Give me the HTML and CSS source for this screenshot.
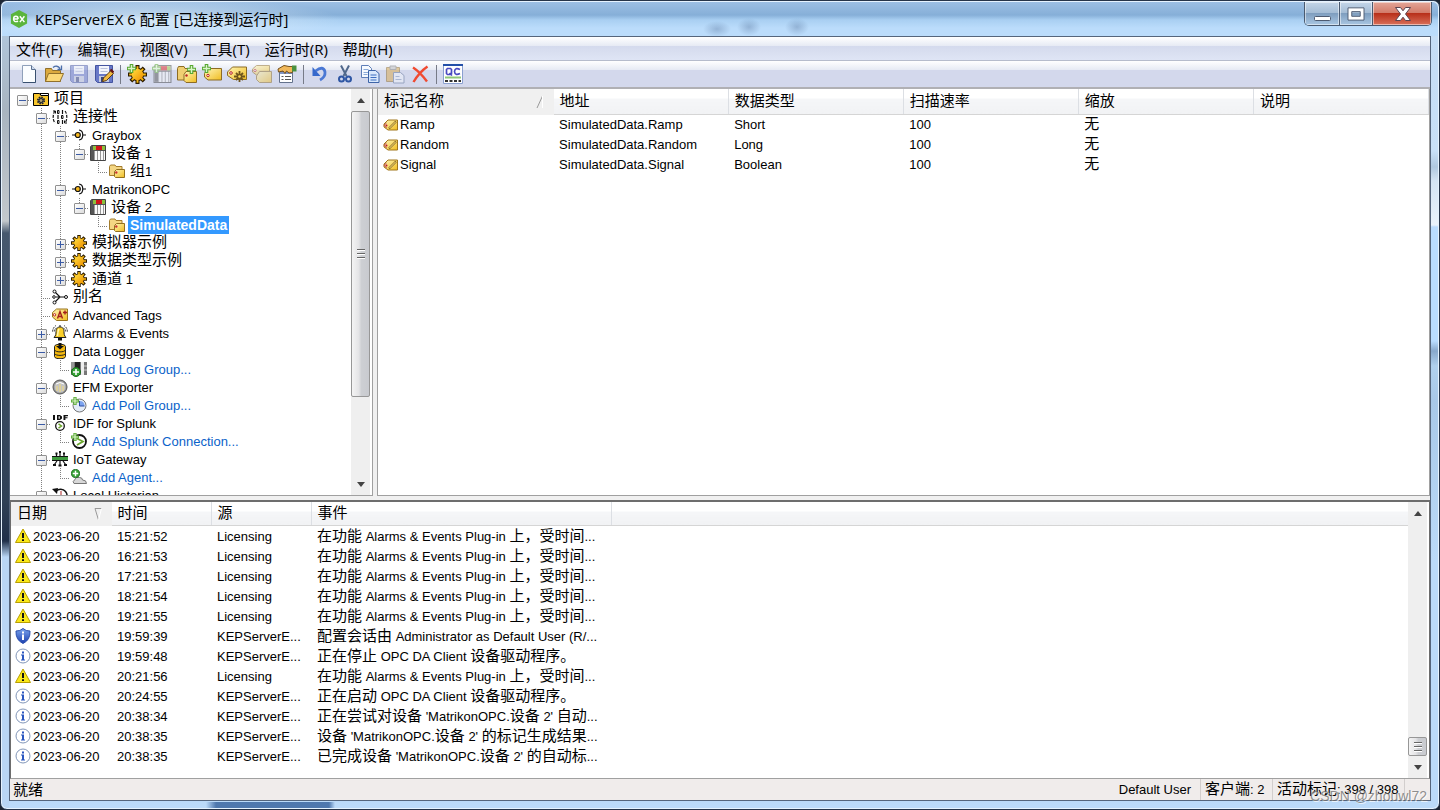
FILE: index.html
```html
<!DOCTYPE html>
<html lang="zh-CN">
<head>
    <meta charset="UTF-8">
    <meta name="viewport" content="width=device-width, initial-scale=1.0">
    <title>KEPServerEX 6 配置</title>
    <link rel="stylesheet" href="styles.css">
</head>
<body>

    <!-- shared icons -->
    <svg class="defs" aria-hidden="true">
        <defs>
            <linearGradient id="gold" x1="0" y1="0" x2="1" y2="1">
                <stop offset="0" stop-color="#fff6b8"/><stop offset="1" stop-color="#f0bc20"/>
            </linearGradient>
            <linearGradient id="orange" x1="0" y1="0" x2="1" y2="1">
                <stop offset="0" stop-color="#ffe040"/><stop offset="1" stop-color="#f09000"/>
            </linearGradient>
            <linearGradient id="bluegrad" x1="0" y1="0" x2="0" y2="1">
                <stop offset="0" stop-color="#7aa4ee"/><stop offset="1" stop-color="#1c3fae"/>
            </linearGradient>
        </defs>

        <symbol id="i-gear" viewBox="0 0 16 16">
            <path d="M8 0v16M0 8h16M2.400 2.400l11.200 11.200M13.600 2.400L2.400 13.600" stroke="#2c1c00" stroke-width="3.400"/>
            <circle cx="8" cy="8" r="5.600" fill="#2c1c00"/>
            <path d="M8 1v14M1 8h14M3.200 3.200l9.600 9.600M12.800 3.200l-9.600 9.600" stroke="#f8b810" stroke-width="1.600"/>
            <circle cx="8" cy="8" r="4.800" fill="url(#orange)"/>
        </symbol>
        <symbol id="i-project" viewBox="0 0 16 16">
            <path d="M.5 2.500h6l1.500 2h7.500v10H.5z" fill="#f8c62c" stroke="#000"/>
            <path d="M7 2.500h8.500v2H8z" fill="#fff" stroke="#000"/>
            <circle cx="8" cy="9.500" r="3.200" fill="#888" stroke="#222" stroke-width="1.800" stroke-dasharray="1.500 1"/>
            <circle cx="8" cy="9.500" r="2" fill="#b0a070" stroke="#222"/>
        </symbol>
        <symbol id="i-connect" viewBox="0 0 16 16">
            <path d="M3 2C.6 5 .6 11 3 14M13 2c2.400 3 2.400 9 0 12" fill="none" stroke="#111" stroke-width="1.200" stroke-dasharray="3 1.200"/>
            <path d="M1 2h2.500v2.500M15 14h-2.500v-2.500" fill="none" stroke="#111"/>
            <path d="M5.500 1.500h1.500v3H5.500zM5.500 11.500h1.500v3H5.500zM9.500 6.500H11v3H9.500z" fill="#fff" stroke="#111"/>
            <path d="M10.500 1v4M6 6v4M10.500 11v4" stroke="#111" stroke-width="1.200"/>
        </symbol>
        <symbol id="i-channel" viewBox="0 0 16 16">
            <path d="M1 8h4M12 8h3" stroke="#111" stroke-width="1.200"/>
            <circle cx="6.800" cy="8" r="2.500" fill="#f6b820" stroke="#111" stroke-width="1.200"/>
            <path d="M8 3c5 .5 5 9.500 0 10" fill="none" stroke="#111" stroke-width="1.200"/>
        </symbol>
        <symbol id="i-device" viewBox="0 0 16 16">
            <path d="M1.500.5h14v15H.5v-14z" fill="#fafafa" stroke="#444"/>
            <path d="M1 1h3v14H1z" fill="#555"/><path d="M6 1h6v4H6z" fill="#d0151b"/>
            <path d="M3 1h3v4H3zM12 1h3v4h-3z" fill="#8cc03c"/>
            <path d="M4.500 5v10M7.500 5v10M10.500 5v10M13.500 5v10" stroke="#999"/><path d="M1 5.500h14" stroke="#555"/>
        </symbol>
        <symbol id="i-group" viewBox="0 0 16 16">
            <path d="M.5 3.500l1-1.500h4.500l1 1.500h6v9H.5z" fill="#f4d683" stroke="#a47c2c"/>
            <path d="M5.500 8.500l2-2h8v8h-9l-1-1z" fill="url(#gold)" stroke="#93701f"/>
            <circle cx="7.300" cy="9.500" r="1.200" fill="#c33"/>
        </symbol>
        <symbol id="i-alias" viewBox="0 0 16 16">
            <path d="M3 3l5 5-5 5M8 8h5M4 8h3" fill="none" stroke="#111" stroke-width="1.200"/>
            <g fill="#fff" stroke="#111"><circle cx="2.500" cy="2.500" r="1.500"/><circle cx="2" cy="8" r="1.300"/><circle cx="2.500" cy="13.500" r="1.500"/><circle cx="14" cy="8" r="1.500"/></g>
        </symbol>
        <symbol id="i-advtag" viewBox="0 0 16 16">
            <path d="M.5 5.500l4-3.500h11v11.500h-11l-4-3.500z" fill="url(#gold)" stroke="#9a741c"/>
            <circle cx="2.500" cy="7.800" r="1.200" fill="#fff" stroke="#b22"/>
            <path d="M5.500 11.500L8 4.500l2.500 7M6.500 9.500h3M11 5.500h4M13 3.500v4" fill="none" stroke="#a3201c" stroke-width="1.400"/>
        </symbol>
        <symbol id="i-bell" viewBox="0 0 16 16">
            <path d="M2 12.500c2-2 2-4 2-6C4 3 6 2 8 2s4 1 4 4.500c0 2 0 4 2 6z" fill="#f9cf2a" stroke="#222"/>
            <path d="M7 4c-1.300 2-1 4-1.500 7" stroke="#fff6b0" fill="none" stroke-width="1.500"/>
            <path d="M6 13h4v2.500H6zM7.500 0h1v2h-1z" fill="#111"/>
            <path d="M.5 6.500Q1 2.500 4 .5M15.500 6.500Q15 2.500 12 .5M2.200 6.500q.3-2.200 2-3.500M13.800 6.500q-.3-2.200-2-3.500" fill="none" stroke="#222" stroke-dasharray="2 1"/>
        </symbol>
        <symbol id="i-logger" viewBox="0 0 16 16">
            <path d="M2.500 3.500c0-3 11-3 11 0v10c0 3-11 3-11 0z" fill="#f4b90f" stroke="#222"/>
            <path d="M2.500 7c1 2.500 10 2.500 11 0M2.500 10.500c1 2.500 10 2.500 11 0" fill="none" stroke="#222"/>
            <path d="M6.500 0h3v3H12L8 6.500 4 3h2.500z" fill="#111"/>
        </symbol>
        <symbol id="i-plus" viewBox="0 0 10 10">
            <circle cx="5" cy="5" r="4.500" fill="#36a336" stroke="#1d6c1d"/><path d="M5 2v6M2 5h6" stroke="#fff" stroke-width="1.600"/>
        </symbol>
        <symbol id="i-star" viewBox="0 0 10 10">
            <path d="M3 0h4v3h3v4H7v3H3V7H0V3h3z" fill="#58a832"/><path d="M5 1v8M1 5h8" stroke="#d9f4c8" stroke-width="1.500"/>
        </symbol>
        <symbol id="i-addlog" viewBox="0 0 16 16">
            <path d="M0 1h16v13H0z" fill="#777"/><path d="M4 1h5v13H4z" fill="#222"/><path d="M10 1h3v13h-3z" fill="#eee"/><path d="M0 1h3v7H0z" fill="#999"/><path d="M13 5h3M13 9h3" stroke="#ccc"/>
            <use href="#i-plus" x="0" y="6" width="10" height="10"/>
        </symbol>
        <symbol id="i-efm" viewBox="0 0 16 16">
            <circle cx="8" cy="8" r="7" fill="#999" stroke="#555"/><circle cx="8" cy="8" r="5.500" fill="#c4c4c4"/>
            <path d="M5 12V7M8 13V5M11 12V7" stroke="#f4dc78"/><path d="M4 5q4-3 8 0" fill="none" stroke="#fff"/>
        </symbol>
        <symbol id="i-addpoll" viewBox="0 0 16 16">
            <circle cx="8.500" cy="8.500" r="6.500" fill="#e3ecf8" stroke="#777"/><path d="M8.500 4v5h5q0-5-5-5z" fill="#7da4f0"/><path d="M8.500 4v5h5" fill="none" stroke="#2a4aa0"/>
            <use href="#i-star" x="0" y="0" width="8" height="8"/>
        </symbol>
        <symbol id="i-idf" viewBox="0 0 16 16">
            <path d="M1 0h2v5H1zM5 0h3l2 1.500v2L8 5H5zM11.500 0H16v1.200h-2.600v1H15.500v1h-2.100V5h-1.900z" fill="#111"/>
            <path d="M6.600 1.200h1.200v2.600H6.600z" fill="#fff"/>
            <circle cx="8" cy="11" r="4.300" fill="#fff" stroke="#111" stroke-width="1.300"/><path d="M6.500 8.800l3 2.200-3 2.200" fill="none" stroke="#6aa42c" stroke-width="1.500"/>
        </symbol>
        <symbol id="i-addsplunk" viewBox="0 0 16 16">
            <circle cx="8.500" cy="8.500" r="6.500" fill="#fff" stroke="#111" stroke-width="1.800"/><path d="M6 5.500l6 3-6 3.500" fill="none" stroke="#6aa42c" stroke-width="1.700"/>
            <use href="#i-star" x="0" y="0" width="8" height="8"/>
        </symbol>
        <symbol id="i-iot" viewBox="0 0 16 16">
            <path d="M0 5.500h16v3.500H0z" fill="#3f9a3f"/><path d="M0 5.500h16M0 9.500h16M8 0v5M4.500 2v3M12 2v3M8 9v6M5 10l-3 4M11 10l3 4" stroke="#111" stroke-width="1.200" fill="none"/>
            <path d="M7 0h2v2H7zM3.500 1.500h2v2h-2zM11 1.500h2v2h-2zM1 13h3v2H1zM6.500 13.500h3v2h-3zM12 13h3v2h-3z" fill="#111"/>
        </symbol>
        <symbol id="i-addagent" viewBox="0 0 16 16">
            <path d="M3 14.500q-2-2 .5-3.500 1.500-4 5-2.500 3 0 3 2.500 4 0 4 3.500z" fill="#d8d8d8" stroke="#777"/>
            <use href="#i-plus" x="0" y="0" width="9" height="9"/>
        </symbol>
        <symbol id="i-history" viewBox="0 0 16 16">
            <path d="M4 4a6.500 6.500 0 1 1-1 8" fill="none" stroke="#111" stroke-width="1.500"/><path d="M0 2l6-1-1 6z" fill="#111"/><path d="M9 4v6" stroke="#a22"/>
        </symbol>
        <symbol id="i-tag" viewBox="0 0 16 14">
            <path d="M1 6l4-4h9.500v10H5L1 9z" fill="url(#gold)" stroke="#a0761c"/>
            <path d="M3.500 5L1 7.200 3.500 10" fill="#f2c4b4" stroke="#b85040"/><circle cx="3.500" cy="7.500" r="1" fill="#b22"/>
            <path d="M6 10.500l7-7" stroke="#8a6a20" stroke-width="2.200"/><path d="M6.500 10l6-6" stroke="#ffe88a"/>
        </symbol>
        <symbol id="i-warn" viewBox="0 0 16 16">
            <path d="M8 1L15.500 14.500H.5z" fill="#f9e71a" stroke="#b89e00" stroke-linejoin="round"/>
            <path d="M8 5v5" stroke="#111" stroke-width="2"/><path d="M7 11.200h2v1.800H7z" fill="#111"/>
        </symbol>
        <symbol id="i-info" viewBox="0 0 16 16">
            <circle cx="8" cy="8" r="7" fill="#fff" stroke="#8296b8"/><path d="M7 3.500h2v2H7zM6 6.500h3v5h1v1H6v-1h1v-4H6z" fill="#2a56c0"/>
        </symbol>
        <symbol id="i-shield" viewBox="0 0 16 16">
            <path d="M1 3q4 .3 7-2.500Q11 3.300 15 3q.5 9-7 12.500Q.5 12 1 3z" fill="url(#bluegrad)" stroke="#2a4fae"/>
            <path d="M7 3.500h2v2H7zM7 6.500h2V12H7z" fill="#fff"/>
        </symbol>
        <symbol id="i-new" viewBox="0 0 20 20">
            <path d="M3.500 1.500h9l4 4v13h-13z" fill="#fbfdff" stroke="#8fa0ba"/><path d="M12.500 1.500v4h4" fill="#cfdcef" stroke="#5d7191"/><path d="M4 18.500h12.500V6" fill="none" stroke="#39506f"/>
        </symbol>
        <symbol id="i-open" viewBox="0 0 20 20">
            <path d="M1.500 4.500h6l1 2h8v11h-15z" fill="#dba93e" stroke="#91702b"/><path d="M4.500 9.500h15l-3.500 8H1.500z" fill="#fbd877" stroke="#91702b"/>
            <path d="M9 3.500q4-3 7 1M17.500 1.500v4h-4" fill="none" stroke="#4b6da8" stroke-width="1.300"/>
        </symbol>
        <symbol id="i-save" viewBox="0 0 20 20">
            <path d="M1.500 1.500h17v17h-15l-2-2z" fill="#6878c8" stroke="#4454a0"/><path d="M5 2h10v8H5z" fill="#f2f4fc"/><path d="M5 12h10v6H5z" fill="#c4cade"/><path d="M7 13h3v5H7z" fill="#38427c"/><path d="M6.500 4.500h7M6.500 7.500h7" stroke="#b8c0dc"/>
        </symbol>
        <symbol id="i-saveas" viewBox="0 0 20 20">
            <use href="#i-save" width="20" height="20"/><path d="M8.500 17.500l1-3.500 7-7 3 2.500-7 7z" fill="#f0b840" stroke="#5b3c12"/><path d="M16.500 5.500l3 3" stroke="#611" stroke-width="2"/>
        </symbol>
        <symbol id="i-newchannel" viewBox="0 0 20 20">
            <use href="#i-gear" x="1" y="1" width="19" height="19"/><use href="#i-star" x="0" y="0" width="9" height="9"/>
        </symbol>
        <symbol id="i-newdevice" viewBox="0 0 20 20">
            <use href="#i-device" x="1" y="1" width="19" height="18"/><use href="#i-star" x="0" y="0" width="9" height="9"/>
        </symbol>
        <symbol id="i-newgroup" viewBox="0 0 20 20">
            <path d="M.5 4.500l1-2H7l1 2h7v11.500H.5z" fill="#f0cf72" stroke="#8d6c24"/><path d="M7 10.500l2-3h10.500v11H9l-2-2z" fill="url(#gold)" stroke="#8d6c24"/><use href="#i-star" x="10" y="1" width="9" height="9"/><circle cx="9.500" cy="11.500" r="1.200" fill="#b22"/>
        </symbol>
        <symbol id="i-newtag" viewBox="0 0 20 20">
            <path d="M2.500 9.500l3-5h14v11.500H6l-3.500-3z" fill="url(#gold)" stroke="#8d6c24"/><use href="#i-star" x="0" y="0" width="9" height="9"/><circle cx="6" cy="11.500" r="1.200" fill="#fff" stroke="#b22"/>
        </symbol>
        <symbol id="i-autotag" viewBox="0 0 20 20">
            <path d="M.5 8l5-5h14v12.500h-13l-6-4z" fill="url(#gold)" stroke="#8d6c24"/><circle cx="4" cy="9" r="1.300" fill="#fff" stroke="#b22"/>
            <path d="M12.500 7v11M7 12.500h11M9 9l7 7M16 9l-7 7" stroke="#6e541c" stroke-width="1.800"/><circle cx="12.500" cy="12.500" r="1.300" fill="#ffd850"/>
        </symbol>
        <symbol id="i-tags" viewBox="0 0 20 20">
            <path d="M.5 5l4-3.500h13v9.500h-13l-4-3z" fill="url(#gold)" stroke="#8d6c24"/><path d="M4.500 12l3-4.500h12v11h-12l-3-3z" fill="url(#gold)" stroke="#8d6c24"/><circle cx="3" cy="6.500" r="1.200" fill="#fff" stroke="#b22"/>
        </symbol>
        <symbol id="i-props" viewBox="0 0 20 20">
            <path d="M2.500 7.500h13v11h-13z" fill="#fff" stroke="#64728c"/><path d="M3 8h12v2H3z" fill="#7f94c4"/><path d="M4.500 12.500h2M4.500 15.500h2M8 12.500h6M8 15.500h6" stroke="#555"/>
            <path d="M1 5l6-3.500 5 1h3.500v6L12 9 9.500 7 8 9.500 6 7 1.500 8z" fill="#f1b85a" stroke="#74501c"/><path d="M15 1.500h4.500v6H15z" fill="#4a9140"/>
        </symbol>
        <symbol id="i-undo" viewBox="0 0 20 20">
            <path d="M5.500 7q8-6 9.500 1 .500 5-5 8" fill="none" stroke="#4a78d4" stroke-width="2.800"/><path d="M2.500 3v9h8z" fill="#3568cc"/>
        </symbol>
        <symbol id="i-cut" viewBox="0 0 20 20">
            <path d="M6 1.500L11.500 12M14 1.500L8.500 12" stroke="#51698c" stroke-width="2" fill="none"/><circle cx="6.500" cy="15" r="2.500" fill="none" stroke="#2e56a4" stroke-width="2"/><circle cx="13.500" cy="15" r="2.500" fill="none" stroke="#2e56a4" stroke-width="2"/>
        </symbol>
        <symbol id="i-copy" viewBox="0 0 20 20">
            <path d="M1.500 1.500h7l3 3v9h-10z" fill="#f6faff" stroke="#5f7fb8"/><path d="M3.500 5.500h5M3.500 8.500h5M3.500 10.500h4" stroke="#8baad8"/>
            <path d="M8.500 6.500h7l3.500 3v9H8.500z" fill="#d8e8fc" stroke="#3d64a8"/><path d="M10.500 11h6M10.500 13.500h6M10.500 16h6" stroke="#3d6ec0"/>
        </symbol>
        <symbol id="i-paste" viewBox="0 0 20 20">
            <path d="M1.500 3.500h13v14h-13z" fill="#d9a848" stroke="#8f6b28"/><path d="M5 2h6v3.500H5z" fill="#bbb" stroke="#777"/><path d="M8.500 8.500h7l3.500 3v7.500H8.500z" fill="#f2f5fb" stroke="#5f7296"/><path d="M10.500 12.500h4M10.500 15.500h6" stroke="#8296b8"/>
        </symbol>
        <symbol id="i-delete" viewBox="0 0 20 20">
            <path d="M3 3.500q7 4.500 14 14M17.500 2.500Q9.500 8 3.500 18" fill="none" stroke="#f04a30" stroke-width="2.400"/>
        </symbol>
        <symbol id="i-qc" viewBox="0 0 20 20">
            <path d="M.5.5h19v19H.5z" fill="#fff" stroke="#8aa0d0"/><path d="M0 0h20v2H0z" fill="#2450a8"/><path d="M2 13.500h16" stroke="#90c878" stroke-width="2"/>
            <path d="M7.500 4.500h-3l-1 1v4l1 1h3l1-1v-4zM6.500 9l2.500 2.500M17 5.500q-5-2.500-5.500 2 .5 4.500 5.500 2" fill="none" stroke="#4a4ac0" stroke-width="1.700"/>
            <path d="M2 17h16" stroke="#333" stroke-width="2" stroke-dasharray="3 1.500"/>
        </symbol>
    </svg>

    <div class="window">
        <header class="titlebar">
            <svg class="logo" viewBox="0 0 18 20"><path d="M9 0l9 4.800v10.200L9 20 0 15V4.800z" fill="#5bb53c"/><path d="M8 10H3q0-3 2.500-3T8 10M3 10q0 4 5 2.500M10 7l5 6.500M15 7l-5 6.500" fill="none" stroke="#fff" stroke-width="1.600"/></svg>
            <h1>KEPServerEX 6 配置 [已连接到运行时]</h1>
            <div class="caption-buttons">
                <button class="min" aria-label="最小化"><svg viewBox="0 0 34 23"><rect x="9.500" y="14.500" width="16" height="4" rx="1" fill="#fff" stroke="#4d5a70"/></svg></button>
                <button class="max" aria-label="最大化"><svg viewBox="0 0 34 23"><path d="M8.500 5.500h17v13h-17zM12.500 9.500v5h9v-5z" fill="#fff" stroke="#4d5a70" fill-rule="evenodd"/></svg></button>
                <button class="close" aria-label="关闭"><svg viewBox="0 0 58 23"><path d="M22.500 5.500h5l2.500 3.300 2.500-3.300h5l-5 6.500 5 6.500h-5L30 15.200l-2.500 3.300h-5l5-6.500z" fill="#fff" stroke="#5a4450"/></svg></button>
            </div>
        </header>

        <div class="client">
            <nav class="menubar">
                <button>文件(F)</button>
                <button>编辑(E)</button>
                <button>视图(V)</button>
                <button>工具(T)</button>
                <button>运行时(R)</button>
                <button>帮助(H)</button>
            </nav>

            <div class="toolbar">
                <button aria-label="新建"><svg><use href="#i-new"/></svg></button>
                <button aria-label="打开"><svg><use href="#i-open"/></svg></button>
                <button aria-label="保存" disabled><svg><use href="#i-save"/></svg></button>
                <button aria-label="另存为"><svg><use href="#i-saveas"/></svg></button>
                <span class="sep"></span>
                <button aria-label="新建通道"><svg><use href="#i-newchannel"/></svg></button>
                <button aria-label="新建设备" disabled><svg><use href="#i-newdevice"/></svg></button>
                <button aria-label="新建标记组"><svg><use href="#i-newgroup"/></svg></button>
                <button aria-label="新建标记"><svg><use href="#i-newtag"/></svg></button>
                <button aria-label="自动生成标记"><svg><use href="#i-autotag"/></svg></button>
                <button aria-label="复制标记" disabled><svg><use href="#i-tags"/></svg></button>
                <button aria-label="属性"><svg><use href="#i-props"/></svg></button>
                <span class="sep"></span>
                <button aria-label="撤消"><svg><use href="#i-undo"/></svg></button>
                <button aria-label="剪切"><svg><use href="#i-cut"/></svg></button>
                <button aria-label="复制"><svg><use href="#i-copy"/></svg></button>
                <button aria-label="粘贴" disabled><svg><use href="#i-paste"/></svg></button>
                <button aria-label="删除"><svg><use href="#i-delete"/></svg></button>
                <span class="sep"></span>
                <button aria-label="Quick Client"><svg><use href="#i-qc"/></svg></button>
            </div>

            <div class="workspace">
                <section class="tree-pane">
                    <div class="tree">
                        <div class="node"><i class="stub"><button class="toggle" aria-label="折叠"></button></i><svg><use href="#i-project"/></svg><span class="cn">项目</span></div>
                        <div class="node"><i></i><i class="tee"><button class="toggle" aria-label="折叠"></button></i><svg><use href="#i-connect"/></svg><span class="cn">连接性</span></div>
                        <div class="node"><i></i><i class="line"></i><i class="tee"><button class="toggle" aria-label="折叠"></button></i><svg><use href="#i-channel"/></svg><span>Graybox</span></div>
                        <div class="node"><i></i><i class="line"></i><i class="line"></i><i class="end"><button class="toggle" aria-label="折叠"></button></i><svg><use href="#i-device"/></svg><span><b class="cn">设备</b> 1</span></div>
                        <div class="node"><i></i><i class="line"></i><i class="line"></i><i></i><i class="end"></i><svg><use href="#i-group"/></svg><span><b class="cn">组</b>1</span></div>
                        <div class="node"><i></i><i class="line"></i><i class="tee"><button class="toggle" aria-label="折叠"></button></i><svg><use href="#i-channel"/></svg><span>MatrikonOPC</span></div>
                        <div class="node"><i></i><i class="line"></i><i class="line"></i><i class="end"><button class="toggle" aria-label="折叠"></button></i><svg><use href="#i-device"/></svg><span><b class="cn">设备</b> 2</span></div>
                        <div class="node selected"><i></i><i class="line"></i><i class="line"></i><i></i><i class="end"></i><svg><use href="#i-group"/></svg><span>SimulatedData</span></div>
                        <div class="node"><i></i><i class="line"></i><i class="tee"><button class="toggle plus" aria-label="展开"></button></i><svg><use href="#i-gear"/></svg><span class="cn">模拟器示例</span></div>
                        <div class="node"><i></i><i class="line"></i><i class="tee"><button class="toggle plus" aria-label="展开"></button></i><svg><use href="#i-gear"/></svg><span class="cn">数据类型示例</span></div>
                        <div class="node"><i></i><i class="line"></i><i class="end"><button class="toggle plus" aria-label="展开"></button></i><svg><use href="#i-gear"/></svg><span><b class="cn">通道</b> 1</span></div>
                        <div class="node"><i></i><i class="tee"></i><svg><use href="#i-alias"/></svg><span class="cn">别名</span></div>
                        <div class="node"><i></i><i class="tee"></i><svg><use href="#i-advtag"/></svg><span>Advanced Tags</span></div>
                        <div class="node"><i></i><i class="tee"><button class="toggle plus" aria-label="展开"></button></i><svg><use href="#i-bell"/></svg><span>Alarms &amp; Events</span></div>
                        <div class="node"><i></i><i class="tee"><button class="toggle" aria-label="折叠"></button></i><svg><use href="#i-logger"/></svg><span>Data Logger</span></div>
                        <div class="node"><i></i><i class="line"></i><i class="end"></i><svg><use href="#i-addlog"/></svg><a href="#">Add Log Group...</a></div>
                        <div class="node"><i></i><i class="tee"><button class="toggle" aria-label="折叠"></button></i><svg><use href="#i-efm"/></svg><span>EFM Exporter</span></div>
                        <div class="node"><i></i><i class="line"></i><i class="end"></i><svg><use href="#i-addpoll"/></svg><a href="#">Add Poll Group...</a></div>
                        <div class="node"><i></i><i class="tee"><button class="toggle" aria-label="折叠"></button></i><svg><use href="#i-idf"/></svg><span>IDF for Splunk</span></div>
                        <div class="node"><i></i><i class="line"></i><i class="end"></i><svg><use href="#i-addsplunk"/></svg><a href="#">Add Splunk Connection...</a></div>
                        <div class="node"><i></i><i class="tee"><button class="toggle" aria-label="折叠"></button></i><svg><use href="#i-iot"/></svg><span>IoT Gateway</span></div>
                        <div class="node"><i></i><i class="line"></i><i class="end"></i><svg><use href="#i-addagent"/></svg><a href="#">Add Agent...</a></div>
                        <div class="node"><i></i><i class="tee"><button class="toggle" aria-label="折叠"></button></i><svg><use href="#i-history"/></svg><span>Local Historian</span></div>
                    </div>
                    <div class="scrollbar">
                        <button class="arrow up" aria-label="向上滚动"></button>
                        <div class="track"><div class="thumb tall"></div></div>
                        <button class="arrow down" aria-label="向下滚动"></button>
                    </div>
                </section>

                <section class="tag-pane">
                    <table class="grid tags">
                        <thead>
                            <tr><th class="sorted">标记名称<svg viewBox="0 0 8 14"><path d="M1 13L6.500 1" stroke="#999"/><path d="M6.500 1v12" stroke="#fff"/></svg></th><th>地址</th><th>数据类型</th><th>扫描速率</th><th>缩放</th><th>说明</th></tr>
                        </thead>
                        <tbody>
                            <tr><td><svg><use href="#i-tag"/></svg>Ramp</td><td>SimulatedData.Ramp</td><td>Short</td><td>100</td><td><b class="cn">无</b></td><td></td></tr>
                            <tr><td><svg><use href="#i-tag"/></svg>Random</td><td>SimulatedData.Random</td><td>Long</td><td>100</td><td><b class="cn">无</b></td><td></td></tr>
                            <tr><td><svg><use href="#i-tag"/></svg>Signal</td><td>SimulatedData.Signal</td><td>Boolean</td><td>100</td><td><b class="cn">无</b></td><td></td></tr>
                        </tbody>
                    </table>
                </section>
            </div>

            <section class="log-pane">
                <div class="log-view">
                    <table class="grid log">
                        <thead>
                            <tr><th class="sorted">日期<svg viewBox="0 0 8 14"><path d="M7.500 1.500H1L4.500 13" fill="none" stroke="#999"/><path d="M7.500 1.500L4.500 13" stroke="#fff"/></svg></th><th>时间</th><th>源</th><th>事件</th><th class="rest"></th></tr>
                        </thead>
                        <tbody>
                            <tr><td><svg><use href="#i-warn"/></svg>2023-06-20</td><td>15:21:52</td><td>Licensing</td><td><b class="cn">在功能</b> Alarms &amp; Events Plug-in <b class="cn">上，受时间</b>...</td></tr>
                            <tr><td><svg><use href="#i-warn"/></svg>2023-06-20</td><td>16:21:53</td><td>Licensing</td><td><b class="cn">在功能</b> Alarms &amp; Events Plug-in <b class="cn">上，受时间</b>...</td></tr>
                            <tr><td><svg><use href="#i-warn"/></svg>2023-06-20</td><td>17:21:53</td><td>Licensing</td><td><b class="cn">在功能</b> Alarms &amp; Events Plug-in <b class="cn">上，受时间</b>...</td></tr>
                            <tr><td><svg><use href="#i-warn"/></svg>2023-06-20</td><td>18:21:54</td><td>Licensing</td><td><b class="cn">在功能</b> Alarms &amp; Events Plug-in <b class="cn">上，受时间</b>...</td></tr>
                            <tr><td><svg><use href="#i-warn"/></svg>2023-06-20</td><td>19:21:55</td><td>Licensing</td><td><b class="cn">在功能</b> Alarms &amp; Events Plug-in <b class="cn">上，受时间</b>...</td></tr>
                            <tr><td><svg><use href="#i-shield"/></svg>2023-06-20</td><td>19:59:39</td><td>KEPServerE...</td><td><b class="cn">配置会话由</b> Administrator as Default User (R/...</td></tr>
                            <tr><td><svg><use href="#i-info"/></svg>2023-06-20</td><td>19:59:48</td><td>KEPServerE...</td><td><b class="cn">正在停止</b> OPC DA Client <b class="cn">设备驱动程序。</b></td></tr>
                            <tr><td><svg><use href="#i-warn"/></svg>2023-06-20</td><td>20:21:56</td><td>Licensing</td><td><b class="cn">在功能</b> Alarms &amp; Events Plug-in <b class="cn">上，受时间</b>...</td></tr>
                            <tr><td><svg><use href="#i-info"/></svg>2023-06-20</td><td>20:24:55</td><td>KEPServerE...</td><td><b class="cn">正在启动</b> OPC DA Client <b class="cn">设备驱动程序。</b></td></tr>
                            <tr><td><svg><use href="#i-info"/></svg>2023-06-20</td><td>20:38:34</td><td>KEPServerE...</td><td><b class="cn">正在尝试对设备</b> 'MatrikonOPC.<b class="cn">设备</b> 2' <b class="cn">自动</b>...</td></tr>
                            <tr><td><svg><use href="#i-info"/></svg>2023-06-20</td><td>20:38:35</td><td>KEPServerE...</td><td><b class="cn">设备</b> 'MatrikonOPC.<b class="cn">设备</b> 2' <b class="cn">的标记生成结果</b>...</td></tr>
                            <tr><td><svg><use href="#i-info"/></svg>2023-06-20</td><td>20:38:35</td><td>KEPServerE...</td><td><b class="cn">已完成设备</b> 'MatrikonOPC.<b class="cn">设备</b> 2' <b class="cn">的自动标</b>...</td></tr>
                        </tbody>
                    </table>
                </div>
                <div class="scrollbar">
                    <button class="arrow up" aria-label="向上滚动"></button>
                    <div class="track at-end"><div class="thumb short"></div></div>
                    <button class="arrow down" aria-label="向下滚动"></button>
                </div>
            </section>

            <footer class="statusbar">
                <span class="ready cn">就绪</span>
                <span class="user">Default User</span>
                <span class="clients"><b class="cn">客户端</b>: 2</span>
                <span class="active-tags"><b class="cn">活动标记</b>: 398 / 398</span>
                <span class="grip"></span>
            </footer>
        </div>

        <div class="watermark">CSDN @zhouwl72</div>
    </div>

</body>
</html>
```

FILE: styles.css
```css
* {
    box-sizing: border-box;
}

body {
    margin: 0;
    background: #1d2633;
    color: #000;
    font: 13px/18px "Liberation Sans", "Noto Sans CJK SC", sans-serif;
}

button {
    padding: 0;
    border: 0;
    background: none;
    font: inherit;
    color: inherit;
}

svg {
    display: block;
    flex: none;
}

.defs {
    position: absolute;
    width: 0;
    height: 0;
}

.cn {
    font-size: 15px;
    font-weight: 400;
    line-height: 16px;
}

/* window frame */
.window {
    position: relative;
    display: flex;
    flex-direction: column;
    min-height: 100vh;
    padding: 0 8px 8px;
    border: 1px solid #263449;
    border-radius: 7px;
    box-shadow: inset 0 0 0 1px #e6f3ff;
    background:
        linear-gradient(90deg, transparent 205px, #4f78ae 215px, #4f78ae 328px, transparent 334px) 0 100% / 100% 7px no-repeat,
        linear-gradient(#b4cde6 0, #a8b4c0 110px, #c3c8cc 220px, #46586e 232px, #2f4056 500px, #20304a 540px, #b9d6f5 556px) 0 0 / 8px 100% no-repeat,
        linear-gradient(#c4dcf4 0, #c8e0f8 150px, #b0c8e0 166px, #d4e4f4 180px, #eaf3fc 224px, #b9dcff 226px, #b9dcff 340px, #88a8cc 350px, #b0d0ee 365px, #a8c8e8 400px, #bbdaf9 560px) 100% 0 / 8px 100% no-repeat,
        #bbdaf9;
}

.titlebar {
    display: flex;
    align-items: center;
    height: 35px;
    margin: 0 -7px;
    padding: 0 6px 0 7px;
    border-radius: 6px 6px 0 0;
    border-top: 1px solid #e6f3ff;
    background:
        radial-gradient(ellipse 190px 22px at 150px 18px, rgba(225, 238, 248, 0.8), transparent),
        radial-gradient(ellipse 14px 8px at 715px 27px, rgba(90, 120, 160, 0.4), transparent),
        radial-gradient(ellipse 12px 9px at 747px 25px, rgba(90, 120, 160, 0.4), transparent),
        radial-gradient(ellipse 12px 9px at 795px 25px, rgba(90, 120, 160, 0.4), transparent),
        linear-gradient(#9cbfe4 0, #86afd8 13px, #a9cff2 18px, #bbdcfb 26px);
}

.logo {
    width: 18px;
    height: 18px;
    margin-left: 1px;
}

.titlebar h1 {
    margin: 0 auto 0 7px;
    font: 15px/20px "Open Sans", "Noto Sans CJK SC", sans-serif;
}

.caption-buttons {
    display: flex;
    align-self: flex-start;
    height: 24px;
    border: 1px solid #4a5a70;
    border-top: 0;
    border-radius: 0 0 5px 5px;
    overflow: hidden;
}

.caption-buttons button {
    background: linear-gradient(#c4d6e8, #a3bbd4 48%, #7f9ebf 50%, #a9c6e2);
    box-shadow: inset 0 0 0 1px rgba(255, 255, 255, 0.5);
}

.caption-buttons svg {
    width: 100%;
    height: 23px;
}

.caption-buttons .min {
    width: 35px;
    border-right: 1px solid #4a5a70;
}

.caption-buttons .max {
    width: 33px;
    border-right: 1px solid #4a5a70;
}

.caption-buttons .close {
    width: 58px;
    background: linear-gradient(#e3a698, #d27a68 48%, #b8301a 50%, #d9705a);
}

.client {
    display: flex;
    flex: 1;
    flex-direction: column;
    border: 1px solid #55657c;
    background: #f0f0f0;
}

.menubar {
    display: flex;
    gap: 15px;
    height: 24px;
    padding-left: 6px;
    border-bottom: 1px solid #b6bccc;
    background: linear-gradient(#fff, #e6eaf4 9px, #d4daed 9px, #dfe5f5);
    font: 15px/22px "Open Sans", "Noto Sans CJK SC", sans-serif;
}

.toolbar {
    display: flex;
    align-items: center;
    gap: 5px;
    height: 28px;
    padding-left: 9px;
    border-bottom: 2px solid #b0b0b4;
    background: linear-gradient(#fff, #e6eaf4 9px, #d3d8ec 9px);
}

.toolbar svg {
    width: 20px;
    height: 20px;
}

.toolbar button:disabled {
    opacity: 0.5;
}

.toolbar .sep {
    width: 1px;
    height: 19px;
    margin: 0 1px;
    background: #777b88;
}

/* upper panes */
.workspace {
    display: flex;
    flex: 1;
    gap: 4px;
    min-height: 0;
}

.tree-pane {
    display: flex;
    flex: none;
    width: 363px;
    border-right: 1px solid #a0a0a0;
    border-bottom: 1px solid #a0a0a0;
    background: #fff;
}

.tree {
    flex: 1;
    height: 0;
    min-height: 100%;
    padding: 1px 0 0 3px;
    overflow: hidden;
}

.node {
    display: flex;
    height: 18px;
}

.node > svg {
    width: 16px;
    height: 16px;
    margin: 1px 2px 0 1px;
}

.node > span,
.node > a {
    padding: 0 2px;
    margin-left: 1px;
    line-height: 19px;
    white-space: nowrap;
}

.node > a {
    color: #0a62c9;
    text-decoration: none;
}

.node > .cn {
    line-height: 16px;
}

.node.selected > span {
    background: #3399ff;
    color: #fff;
    font-size: 14px;
    font-weight: bold;
    line-height: 18px;
}

/* dotted guide lines */
.node i {
    flex: none;
    width: 19px;
    padding: 5px 0 0 4px;
    --across: repeating-linear-gradient(90deg, #808080 0 1px, transparent 1px 2px) 9px 10px / 10px 1px no-repeat;
    --down: repeating-linear-gradient(#808080 0 1px, transparent 1px 2px) 9px 0;
}

.node .line {
    background: var(--down) / 1px 18px no-repeat;
}

.node .stub {
    background: var(--across);
}

.node .tee {
    background: var(--across), var(--down) / 1px 18px no-repeat;
}

.node .end {
    background: var(--across), var(--down) / 1px 10px no-repeat;
}

.toggle {
    display: block;
    width: 11px;
    height: 11px;
    border: 1px solid #919191;
    border-radius: 1px;
    background: linear-gradient(#3b5ba5, #3b5ba5) center / 7px 1px no-repeat, linear-gradient(135deg, #fff, #dcdcdc);
}

.toggle.plus {
    background: linear-gradient(#3b5ba5, #3b5ba5) center / 7px 1px no-repeat, linear-gradient(#3b5ba5, #3b5ba5) center / 1px 7px no-repeat, linear-gradient(135deg, #fff, #dcdcdc);
}

/* scrollbars */
.scrollbar {
    display: flex;
    flex: none;
    flex-direction: column;
    width: 19px;
    margin-right: 2px;
    background: #efefef;
}

.arrow {
    display: flex;
    align-items: center;
    justify-content: center;
    height: 22px;
}

.arrow::before {
    content: "";
    border: 4px solid transparent;
}

.arrow.up::before {
    border-bottom: 5px solid #444;
    border-top: 0;
}

.arrow.down::before {
    border-top: 5px solid #444;
    border-bottom: 0;
}

.track {
    display: flex;
    flex: 1;
    flex-direction: column;
}

.track.at-end {
    justify-content: flex-end;
}

.thumb {
    display: flex;
    align-items: center;
    justify-content: center;
    border: 1px solid #979797;
    border-radius: 2px;
    background: linear-gradient(90deg, #f4f4f4, #e4e4e6 40%, #cdcfd3 55%, #c8cacf);
}

.thumb::before {
    content: "";
    width: 8px;
    height: 10px;
    background: repeating-linear-gradient(#666 0 1px, #fff 1px 2px, transparent 2px 4px);
}

.thumb.tall {
    height: 79%;
}

.thumb.short {
    height: 19px;
}

/* tables */
.tag-pane {
    flex: 1;
    border: 1px solid #a0a0a0;
    border-top: 0;
    background: #fff;
}

.grid {
    table-layout: fixed;
    border-collapse: collapse;
}

.grid th {
    padding: 0 6px;
    border-right: 1px solid #dcdfe4;
    border-bottom: 1px solid #d5d5d5;
    background: linear-gradient(#fff 9px, #f5f6f8 10px, #f1f2f4);
    font-size: 15px;
    font-weight: 400;
    line-height: 20px;
    text-align: left;
}

.grid th.sorted {
    background: #f0f0f0;
    border-color: #f0f0f0;
}

.grid th svg {
    float: right;
    width: 8px;
    height: 14px;
    margin: 4px 3px 0 0;
}

.grid td {
    height: 20px;
    padding: 0 6px;
    line-height: 20px;
    white-space: nowrap;
}

.grid td:first-child {
    padding: 0 4px;
}

.grid td svg {
    float: left;
    width: 16px;
    height: 16px;
    margin: 1px 2px 0 0;
}

.tags {
    width: 1051px;
}

.tags th {
    width: 175px;
    height: 25px;
}

.tags td:first-child {
    padding-left: 5px;
}

.tags tbody td svg {
    height: 14px;
    margin-top: 3px;
    margin-right: 1px;
}

.log-pane {
    display: flex;
    flex: none;
    height: 279px;
    margin-top: 4px;
    border: 1px solid #6d6d6d;
    border-width: 2px 1px 1px;
    border-bottom-color: #a0a0a0;
    background: #fff;
}

.log-view {
    flex: 1;
}

.log {
    width: 100%;
}

.log th {
    width: 100px;
    height: 23px;
}

.log th:nth-child(4) {
    width: 300px;
}

.log th.rest {
    width: auto;
    border-right: 0;
}

.log tbody::before {
    content: "";
    display: block;
    height: 1px;
}

/* status bar */
.statusbar {
    display: flex;
    height: 21px;
    line-height: 22px;
    background: #f0eceb;
}

.statusbar > span {
    padding: 0 4px;
    border-right: 1px solid #d2cecd;
    white-space: nowrap;
}

.statusbar .ready {
    flex: 1;
    padding-left: 3px;
    border-right: 0;
    line-height: 21px;
}

.statusbar .user {
    padding-right: 9px;
}

.statusbar .clients {
    width: 72px;
}

.statusbar .active-tags {
    width: 132px;
}

.statusbar .grip {
    width: 25px;
    border-right: 0;
}

.watermark {
    position: absolute;
    right: 12px;
    bottom: 4px;
    color: rgba(110, 110, 110, 0.75);
    font-size: 14px;
    text-shadow: 1px 1px 0 rgba(255, 255, 255, 0.7);
}
```
